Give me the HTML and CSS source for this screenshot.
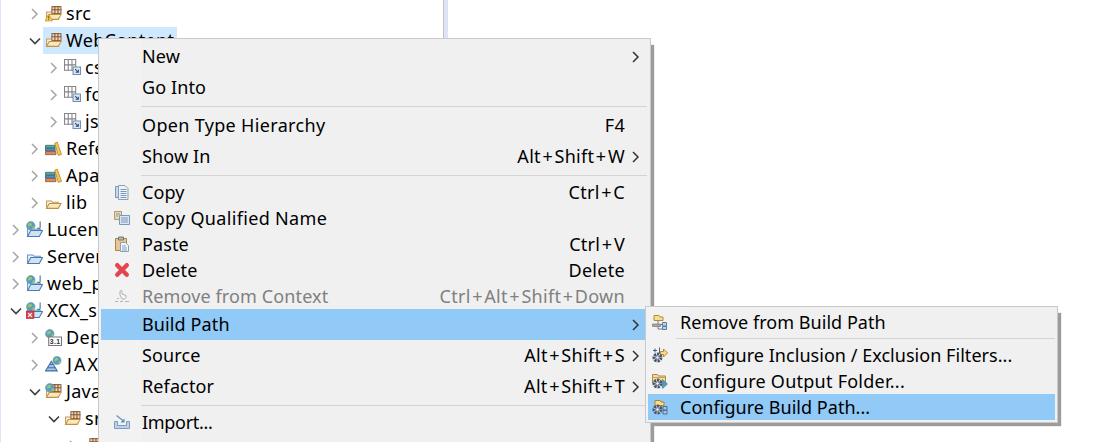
FILE: index.html
```html
<!DOCTYPE html>
<html lang="en">
<head>
<meta charset="utf-8">
<title>Eclipse Build Path menu</title>
<link rel="stylesheet" href="styles.css">
</head>
<body>
<svg class="defs" xmlns="http://www.w3.org/2000/svg">
  <symbol id="open-folder" viewBox="0 0 16 16">
    <path d="M1.500 13V6.500h4.500l1 1.300h5.500v1.500" fill="#fbf2dc" stroke="#c29a5c"/>
    <path d="M1.500 13.500 4 9h11l-2.500 4.500z" fill="#fde9b8" stroke="#c0914a"/>
  </symbol>
  <symbol id="grid" viewBox="0 0 16 16">
    <path d="M6.500 1.500h8.500v6.500H6.500z" fill="#efd8b6" stroke="#9a6c48"/>
    <path d="M9.300 1v7.500M12.200 1v7.500M6 4.500h9.500" stroke="#80553a" fill="none"/>
  </symbol>
  <symbol id="pkg-folder" viewBox="0 0 16 16">
    <use href="#open-folder"/><use href="#grid"/>
    <path d="M5 9.500h9.500l-.6 1.200H4.400z" fill="#fde9b8"/>
  </symbol>
  <symbol id="warn" viewBox="0 0 16 16">
    <path d="M3.500 8.500 7 15H0z" fill="#fbd452" stroke="#c08f30" stroke-width=".7"/>
    <path d="M3.500 10.500v2.200M3.500 13.400v.8" stroke="#63430f" fill="none"/>
  </symbol>
  <symbol id="link-pkg" viewBox="0 0 16 16">
    <path d="M.5 .5h10.500v10H.5z" fill="#fff" stroke="#85858a"/>
    <path d="M4 0v11M7.500 0v11M0 5.500h11" stroke="#85858a" fill="none"/>
    <path d="M8.500 7.500h7v7h-7z" fill="#dbe6f3" stroke="#6f8fb6"/>
    <path d="M10.500 9.500l3 3M13.500 10v2.500h-2.500" stroke="#2f4d75" fill="none"/>
  </symbol>
  <symbol id="books" viewBox="0 0 16 16">
    <path d="M.5 5h9v2.500h-9z" fill="#5cab98" stroke="#367269" stroke-width=".8"/>
    <path d="M.5 7.800h9v2.600h-9z" fill="#4f8fc0" stroke="#33608c" stroke-width=".8"/>
    <path d="M.5 10.800h9.800v3H.5z" fill="#d48a59" stroke="#955a38" stroke-width=".8"/>
    <path d="M9.200 3 11.500 2l4 11.500-3 1z" fill="#f8c954" stroke="#b58628" stroke-width=".8"/>
  </symbol>
  <symbol id="blue-folder" viewBox="0 0 16 16">
    <path d="M1.500 14V6.500h5l1 1.300h6v1.500" fill="#eef5fc" stroke="#6c92c0"/>
    <path d="M1.500 14.500 4.500 9h11l-3 5.500z" fill="#cfe3f7" stroke="#4a79b2"/>
  </symbol>
  <symbol id="globe" viewBox="0 0 16 16">
    <circle cx="4.500" cy="4.500" r="4" fill="#4fa0cf" stroke="#7a979e" stroke-width=".6"/>
    <path d="M2 2.500c1.500-1 3-.9 3.600 0s-.6 2.200-1.800 2.300-1.300 1.700-1.600 0zM6.200 5.500c.8-.6 1.700-.6 2 0-.3 1.200-1.300 2.200-2.300 2.400z" fill="#a3c45a"/>
  </symbol>
  <symbol id="project" viewBox="0 0 16 16">
    <use href="#blue-folder"/><use href="#globe"/>
    <path d="M13.300 .5v5.300c0 1.400-1.900 1.500-2.700.6" fill="none" stroke="#3b6aa0"/>
  </symbol>
  <symbol id="err" viewBox="0 0 16 16">
    <path d="M0 8.500h7.500V15.500H0z" fill="#dc4650" stroke="#a3222c" stroke-width=".6"/>
    <path d="M2 10.500l3.500 3.500M5.500 10.500 2 14" stroke="#fff" fill="none"/>
  </symbol>
  <symbol id="facet" viewBox="0 0 16 16">
    <use href="#globe"/>
    <path d="M3.500 7.500h12v8h-12z" fill="#fff" stroke="#77777c"/>
    <text x="9.500" y="14" class="facet-text">3.1</text>
  </symbol>
  <symbol id="jax" viewBox="0 0 16 16">
    <path d="M6 5 11.500 14H.5z" fill="#a9c3e2" stroke="#3f6ea8"/>
    <path d="M2.500 11h7M4.500 8h3" stroke="#3f6ea8" fill="none"/>
    <g transform="translate(7 0) scale(.95)"><use href="#globe"/></g>
  </symbol>
  <symbol id="copy" viewBox="0 0 16 16">
    <path d="M1.500 2.500h6v11h-6z" fill="#c9d9ea" stroke="#7d98b4"/>
    <path d="M4.500 1.500h6.500l3 3v11h-9.500z" fill="#eef3f8" stroke="#86a0ba"/>
    <path d="M6.500 5.500h6M6.500 7.500h6M6.500 9.500h6M6.500 11.500h6M6.500 13.500h6" stroke="#7c99b7" fill="none"/>
  </symbol>
  <symbol id="copyq" viewBox="0 0 16 16">
    <path d="M.5 1.500h7v8h-7z" fill="#e8d9b3" stroke="#b39a66"/>
    <path d="M5.500 5.500h10v9h-10z" fill="#d9e6f3" stroke="#7d98b4"/>
    <path d="M7 8h7M7 10h7M7 12h7M2 4h4M2 6h2" stroke="#7c99b7" fill="none"/>
  </symbol>
  <symbol id="paste" viewBox="0 0 16 16">
    <path d="M1.500 2.500h11v12h-11z" fill="#e8c795" stroke="#a98450"/>
    <path d="M4.500 1h5v3h-5z" fill="#b9b9b9" stroke="#777"/>
    <path d="M6.500 6.500h5l3 3v6h-8z" fill="#f2f6fa" stroke="#89a0b8"/>
    <path d="M8 10h4M8 12h5M8 14h5" stroke="#89a0b8" fill="none"/>
  </symbol>
  <symbol id="del" viewBox="0 0 16 16">
    <path d="M3.200 3.200l9.600 9.600M12.800 3.200l-9.600 9.600" stroke="#e2474f" stroke-width="4.400" stroke-linecap="round" fill="none"/>
  </symbol>
  <symbol id="remove" viewBox="0 0 16 16">
    <path d="M6 7V3.500c0-1.500 2-1.500 2 0V6l4 1.500c.5 2-.5 3-1.500 3.500H8z" fill="#f4f4f4" stroke="#b0b0b0"/>
    <path d="M1 13.500h3M6 13.500h3M11 13.500h4M3 10.500h2" stroke="#b5b5b5" fill="none"/>
  </symbol>
  <symbol id="import" viewBox="0 0 16 16">
    <path d="M.5 7.500v7h15v-7h-3v4h-9v-4z" fill="#bdd2e8" stroke="#7e9cbc"/>
    <path d="M2.500 1.500l7 5.500" stroke="#6f94bc" stroke-width="1.400" fill="none"/>
    <path d="M10.500 4.500v4h-4z" fill="#5b89b8"/>
  </symbol>
  <symbol id="tree-folders" viewBox="0 0 16 16">
    <path d="M2 6.500V1.500h5l1 1.500h3v3.500z" fill="#f8dc93" stroke="#b18c3c"/>
    <path d="M6 6.500v8.500h4M6 10.500h4" stroke="#6d7f94" fill="none"/>
    <path d="M10.500 8.500h4v3.500h-4zM10.500 12.500h4v3h-4z" fill="#bcd2e8" stroke="#5c7ea3"/>
    <path d="M.5 10h8v2.500h-8z" fill="#a9a9a9" stroke="#6a6a6a" stroke-width=".6"/>
  </symbol>
  <symbol id="gear" viewBox="0 0 16 16">
    <circle cx="5.500" cy="10.500" r="3.600" fill="#dfe5ec" stroke="#47566e" stroke-width="2.800" stroke-dasharray="2.300 .9"/>
    <circle cx="5.500" cy="10.500" r="1.800" fill="#eef2f6" stroke="#47566e" stroke-width=".8"/>
  </symbol>
  <symbol id="inclusion" viewBox="0 0 16 16">
    <path d="M1 3.500h4M3 1.500v4M7.500 .5v6" stroke="#46617f" fill="none"/>
    <path d="M8.500 4.500h3V2l4 4-4 4V7.500h-3z" fill="#f8d98f" stroke="#b88a2e"/>
    <use href="#gear"/>
  </symbol>
  <symbol id="output" viewBox="0 0 16 16">
    <path d="M.5 10V1.500h5l1 1.500h7v7z" fill="#f5dc9d" stroke="#ad8a45"/>
    <path d="M.5 4.500h13" stroke="#c8a45a"/>
    <use href="#gear"/>
    <path d="M10.500 6.500l5 4.500-5 4.500z" fill="#4e9cbb" stroke="#347c99" stroke-width=".6"/>
  </symbol>
  <symbol id="build" viewBox="0 0 16 16">
    <path d="M3 6.500V1.500h5l1 1.500h3v3.500z" fill="#f8dc93" stroke="#a9853a"/>
    <use href="#gear"/>
    <path d="M11 7.500h4v3.500h-4zM11 11.500h4v3.500h-4z" fill="#a9c4e0" stroke="#4c6e95"/>
  </symbol>
  <symbol id="chev" viewBox="0 0 16 16">
    <path d="M5 3l5 5-5 5" fill="none" stroke="currentColor" stroke-width="1.500"/>
  </symbol>
  <symbol id="chev-d" viewBox="0 0 16 16">
    <path d="M3 5.500l5 5 5-5" fill="none" stroke="currentColor" stroke-width="1.700"/>
  </symbol>
</svg>

<div class="screen">
  <div class="tree">
    <div class="row l2"><svg class="tw"><use href="#chev"/></svg><svg class="ic"><use href="#pkg-folder"/><use href="#warn"/></svg><span>src</span></div>
    <div class="row l2 selected"><svg class="tw open"><use href="#chev-d"/></svg><svg class="ic"><use href="#pkg-folder"/></svg><span>WebContent</span></div>
    <div class="row l3"><svg class="tw"><use href="#chev"/></svg><svg class="ic"><use href="#link-pkg"/></svg><span>css</span></div>
    <div class="row l3"><svg class="tw"><use href="#chev"/></svg><svg class="ic"><use href="#link-pkg"/></svg><span>fonts</span></div>
    <div class="row l3"><svg class="tw"><use href="#chev"/></svg><svg class="ic"><use href="#link-pkg"/></svg><span>js</span></div>
    <div class="row l2"><svg class="tw"><use href="#chev"/></svg><svg class="ic"><use href="#books"/></svg><span>Referenced Libraries</span></div>
    <div class="row l2"><svg class="tw"><use href="#chev"/></svg><svg class="ic"><use href="#books"/></svg><span>Apache Tomcat</span></div>
    <div class="row l2"><svg class="tw"><use href="#chev"/></svg><svg class="ic"><use href="#open-folder"/></svg><span>lib</span></div>
    <div class="row l1"><svg class="tw"><use href="#chev"/></svg><svg class="ic"><use href="#project"/></svg><span>Lucene</span></div>
    <div class="row l1"><svg class="tw"><use href="#chev"/></svg><svg class="ic"><use href="#blue-folder"/></svg><span>Servers</span></div>
    <div class="row l1"><svg class="tw"><use href="#chev"/></svg><svg class="ic"><use href="#project"/></svg><span>web_project</span></div>
    <div class="row l1"><svg class="tw open"><use href="#chev-d"/></svg><svg class="ic"><use href="#project"/><use href="#err"/></svg><span>XCX_server</span></div>
    <div class="row l2"><svg class="tw"><use href="#chev"/></svg><svg class="ic"><use href="#facet"/></svg><span>Deployment Descriptor</span></div>
    <div class="row l2"><svg class="tw"><use href="#chev"/></svg><svg class="ic"><use href="#jax"/></svg><span class="caps">JAX-WS Web Services</span></div>
    <div class="row l2"><svg class="tw open"><use href="#chev-d"/></svg><svg class="ic"><use href="#pkg-folder"/><use href="#globe"/></svg><span>Java Resources</span></div>
    <div class="row l3"><svg class="tw open"><use href="#chev-d"/></svg><svg class="ic"><use href="#pkg-folder"/></svg><span>src</span></div>
    <div class="row l4"><svg class="tw"><use href="#chev"/></svg><svg class="ic"><use href="#grid"/></svg><span>com</span></div>
  </div>
  <div class="editor"></div>

  <div class="menu main-menu">
    <div class="item tall"><span class="gut"></span><span class="label">New</span><svg class="arrow"><use href="#chev"/></svg></div>
    <div class="item tall"><span class="gut"></span><span class="label">Go Into</span><span class="arrow"></span></div>
    <div class="sep"></div>
    <div class="item tall"><span class="gut"></span><span class="label wide">Open Type Hierarchy</span><span class="key">F4</span><span class="arrow"></span></div>
    <div class="item tall"><span class="gut"></span><span class="label">Show In</span><span class="key">Alt<i>+</i>Shift<i>+</i>W</span><svg class="arrow"><use href="#chev"/></svg></div>
    <div class="sep"></div>
    <div class="item"><span class="gut"><svg class="ic"><use href="#copy"/></svg></span><span class="label">Copy</span><span class="key">Ctrl<i>+</i>C</span><span class="arrow"></span></div>
    <div class="item"><span class="gut"><svg class="ic"><use href="#copyq"/></svg></span><span class="label wide">Copy Qualified Name</span><span class="arrow"></span></div>
    <div class="item"><span class="gut"><svg class="ic"><use href="#paste"/></svg></span><span class="label">Paste</span><span class="key">Ctrl<i>+</i>V</span><span class="arrow"></span></div>
    <div class="item"><span class="gut"><svg class="ic"><use href="#del"/></svg></span><span class="label">Delete</span><span class="key">Delete</span><span class="arrow"></span></div>
    <div class="item disabled"><span class="gut"><svg class="ic"><use href="#remove"/></svg></span><span class="label">Remove from Context</span><span class="key">Ctrl<i>+</i>Alt<i>+</i>Shift<i>+</i>Down</span><span class="arrow"></span></div>
    <div class="item tall active"><span class="gut"></span><span class="label">Build Path</span><svg class="arrow"><use href="#chev"/></svg></div>
    <div class="item tall"><span class="gut"></span><span class="label">Source</span><span class="key">Alt<i>+</i>Shift<i>+</i>S</span><svg class="arrow"><use href="#chev"/></svg></div>
    <div class="item tall"><span class="gut"></span><span class="label">Refactor</span><span class="key">Alt<i>+</i>Shift<i>+</i>T</span><svg class="arrow"><use href="#chev"/></svg></div>
    <div class="sep"></div>
    <div class="item"><span class="gut"><svg class="ic"><use href="#import"/></svg></span><span class="label narrow">Import...</span><span class="arrow"></span></div>
    <div class="item"><span class="gut"></span><span class="label narrow">Export...</span><span class="arrow"></span></div>
  </div>

  <div class="menu sub-menu">
    <div class="item"><span class="gut"><svg class="ic"><use href="#tree-folders"/></svg></span><span class="label tight">Remove from Build Path</span></div>
    <div class="sep"></div>
    <div class="item"><span class="gut"><svg class="ic"><use href="#inclusion"/></svg></span><span class="label tight">Configure Inclusion / Exclusion Filters...</span></div>
    <div class="item"><span class="gut"><svg class="ic"><use href="#output"/></svg></span><span class="label mid">Configure Output Folder...</span></div>
    <div class="item active"><span class="gut"><svg class="ic"><use href="#build"/></svg></span><span class="label tight">Configure Build Path...</span></div>
  </div>
</div>
</body>
</html>
```

FILE: styles.css
```css
* { box-sizing: border-box; }
html, body { margin: 0; padding: 0; background: #fff; }
body { font-family: "Noto Sans", "Liberation Sans", sans-serif; font-size: 18px; color: #000; overflow: hidden; }
.defs { display: none; }
.facet-text { font-family: "Liberation Sans", sans-serif; font-size: 6.500px; font-weight: 700; text-anchor: middle; fill: #333; }
.screen { position: relative; z-index: 0; display: flex; width: 1113px; height: 442px; overflow: hidden; }

.tree { width: 444px; height: 442px; flex: none; overflow: hidden; border-left: 1px solid #dde4f5; border-right: 1px solid #c4c4c4; letter-spacing: .3px; }
.row { display: flex; align-items: center; height: 27px; white-space: nowrap; }
.row span { margin-left: 4px; line-height: 27px; }
.row .caps { letter-spacing: 2px; margin-left: 5px; }
.l1 { padding-left: 7px; }
.l2 { padding-left: 26px; }
.l3 { padding-left: 45px; }
.l4 { padding-left: 64px; }
.tw { width: 16px; height: 16px; margin-right: 2px; flex: none; color: #a6a6a6; }
.tw.open { color: #404040; }
.ic { width: 16px; height: 16px; flex: none; display: block; overflow: visible; }
.tree .ic { width: 17px; height: 17px; }
.selected { position: relative; }
.selected::before { content: ""; position: absolute; left: 42px; top: 0; width: 134px; height: 27px; background: #cde8ff; z-index: -1; }

.editor { flex: 1; border-left: 4px solid #dde4f5; }

.menu { position: absolute; background: linear-gradient(to right, #f2f2f2 42px, #f0f0f0 42px); border: 1px solid #c9c9c9; padding: 2px; box-shadow: 5px 5px 1px -2px #9c9c9c; white-space: nowrap; }
.main-menu { left: 98px; top: 38px; width: 553px; height: 440px; }
.sub-menu { left: 645px; top: 306px; width: 413px; z-index: 2; }

.item { display: flex; align-items: center; height: 26px; padding-right: 4px; }
.item.tall { height: 31px; }
.item.active { background: #91c9f7; }
.item.disabled { color: #808080; }
.gut { width: 41px; flex: none; padding-left: 13px; }
.sub-menu .gut { width: 32px; padding-left: 4px; }
.label { flex: 1; letter-spacing: .12px; }
.label.wide { letter-spacing: .33px; }
.label.mid { letter-spacing: .25px; }
.label.tight { letter-spacing: .04px; }
.label.narrow { letter-spacing: -.3px; }
.tall .label, .tall .key { padding-bottom: 2px; }
.key { margin-right: 3px; letter-spacing: .3px; }
.key i { font-style: normal; margin: 0 1.500px; }
.arrow { width: 16px; height: 16px; flex: none; color: #333; }
.sep { height: 7px; margin-left: 40px; margin-right: 1px; background: linear-gradient(#d4d4d4, #d4d4d4) center / 100% 1px no-repeat; }
.sub-menu .sep { margin-left: 28px; margin-right: 0; }
```
